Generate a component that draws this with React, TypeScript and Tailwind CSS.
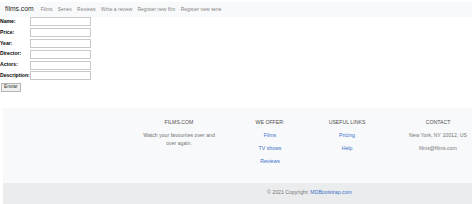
import React from 'react';

const navLinks = ['Films', 'Series', 'Reviews', 'Write a review', 'Register new film', 'Register new serie'];
const fields = ['Name:', 'Price:', 'Year:', 'Director:', 'Actors:', 'Description:'];

function Navbar() {
  return (
    <nav className="mt-[2px] mr-[2px] h-[14.5px] bg-[#f8f9fa] flex items-center pl-[5px]">
      <span className="text-[6.8px] text-[rgba(0,0,0,0.9)] mr-[7px]">films.com</span>
      <ul className="flex gap-[5.3px] text-[4.95px] text-[rgba(0,0,0,0.55)]">
        {navLinks.map((l) => (
          <li key={l}>{l}</li>
        ))}
      </ul>
    </nav>
  );
}

function FilmForm() {
  return (
    <form className="flex flex-col">
      {fields.map((f) => (
        <div key={f} className="flex items-center h-[10.8px]">
          <label className="w-[30px] text-[5.1px] font-bold text-black">{f}</label>
          <input type="text" className="w-[61px] h-[9px] border border-[#c8c8c8] bg-white" />
        </div>
      ))}
      <div className="flex mt-[2px] pl-[1px]">
        <button type="button" className="h-[8.5px] px-[2px] text-[4.8px] border border-[#b5b5b5] bg-[#f0f0f0] text-[#333] leading-none">
          Enviar
        </button>
      </div>
    </form>
  );
}

function Footer() {
  return (
    <footer className="mt-[16px] ml-[3px] mr-[2px] bg-[#f8f9fa] text-[5.2px] text-[#757575]">
      <div className="flex pl-[127px] pt-[10px] h-[75px]">
        <div className="w-[98px] text-center">
          <h6 className="uppercase text-[#4f4f4f] font-medium h-[13px] leading-[8px]">films.com</h6>
          <p className="leading-[8.3px]">Watch your favourites over and<br />over again.</p>
        </div>
        <div className="w-[84px] text-center">
          <h6 className="uppercase text-[#4f4f4f] font-medium h-[13px] leading-[8px]">We offer:</h6>
          <p className="h-[13px] leading-[8px] text-[#3b71ca]">Films</p>
          <p className="h-[13px] leading-[8px] text-[#3b71ca]">TV shows</p>
          <p className="h-[13px] leading-[8px] text-[#3b71ca]">Reviews</p>
        </div>
        <div className="w-[70px] text-center">
          <h6 className="uppercase text-[#4f4f4f] font-medium h-[13px] leading-[8px]">Useful links</h6>
          <p className="h-[13px] leading-[8px] text-[#3b71ca]">Pricing</p>
          <p className="h-[13px] leading-[8px] text-[#3b71ca]">Help</p>
        </div>
        <div className="w-[68px] ml-[22px] text-center">
          <h6 className="uppercase text-[#4f4f4f] font-medium h-[13px] leading-[8px]">Contact</h6>
          <p className="h-[13px] leading-[8px]">New York, NY 10012, US</p>
          <p className="h-[13px] leading-[8px]">films@films.com</p>
        </div>
      </div>
      <div className="h-[21px] bg-[rgba(0,0,0,0.05)] flex items-center pl-[264px]">
        <span>
          © 2021 Copyright: <span className="text-[#3b71ca]">MDBootstrap.com</span>
        </span>
      </div>
    </footer>
  );
}

export default function App() {
  return (
    <div className="w-[474px] h-[204px] overflow-hidden bg-white font-['Liberation_Sans',Arial,sans-serif]">
      <Navbar />
      <FilmForm />
      <Footer />
    </div>
  );
}
